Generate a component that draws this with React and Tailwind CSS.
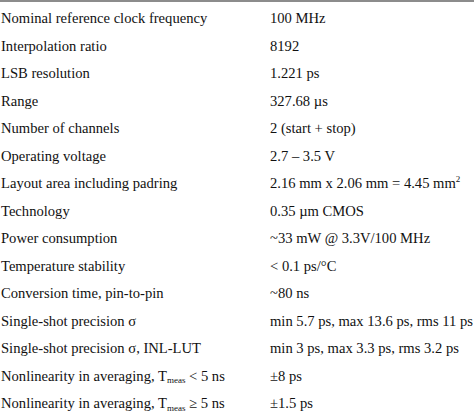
const rows = [
  ['Nominal reference clock frequency', '100 MHz'],
  ['Interpolation ratio', '8192'],
  ['LSB resolution', '1.221 ps'],
  ['Range', '327.68 µs'],
  ['Number of channels', '2 (start + stop)'],
  ['Operating voltage', '2.7 – 3.5 V'],
  [
    'Layout area including padring',
    <>
      2.16 mm x 2.06 mm = 4.45 mm<sup className="text-[9px] -top-[6px]">2</sup>
    </>,
  ],
  ['Technology', '0.35 µm CMOS'],
  ['Power consumption', '~33 mW @ 3.3V/100 MHz'],
  ['Temperature stability', '< 0.1 ps/°C'],
  ['Conversion time, pin-to-pin', '~80 ns'],
  ['Single-shot precision σ', 'min 5.7 ps, max 13.6 ps, rms 11 ps'],
  ['Single-shot precision σ, INL-LUT', 'min 3 ps, max 3.3 ps, rms 3.2 ps'],
  [
    <>
      Nonlinearity in averaging, T<sub className="text-[9px]">meas</sub> &lt; 5 ns
    </>,
    '±8 ps',
  ],
  [
    <>
      Nonlinearity in averaging, T<sub className="text-[9px]">meas</sub> ≥ 5 ns
    </>,
    '±1.5 ps',
  ],
]

export default function App() {
  return (
    <div className="w-[474px] h-[415px] overflow-hidden bg-white text-[#111] font-['Liberation_Serif','Times_New_Roman',serif] text-[14.6px]">
      <div className="border-t-2 border-[#8c8c8c] pt-[3.4px]">
        {rows.map(([label, value], i) => (
          <div key={i} className="grid grid-cols-[270px_1fr] h-[27.5px] leading-[27.5px] whitespace-nowrap">
            <div className="pl-px">{label}</div>
            <div>{value}</div>
          </div>
        ))}
      </div>
    </div>
  )
}
